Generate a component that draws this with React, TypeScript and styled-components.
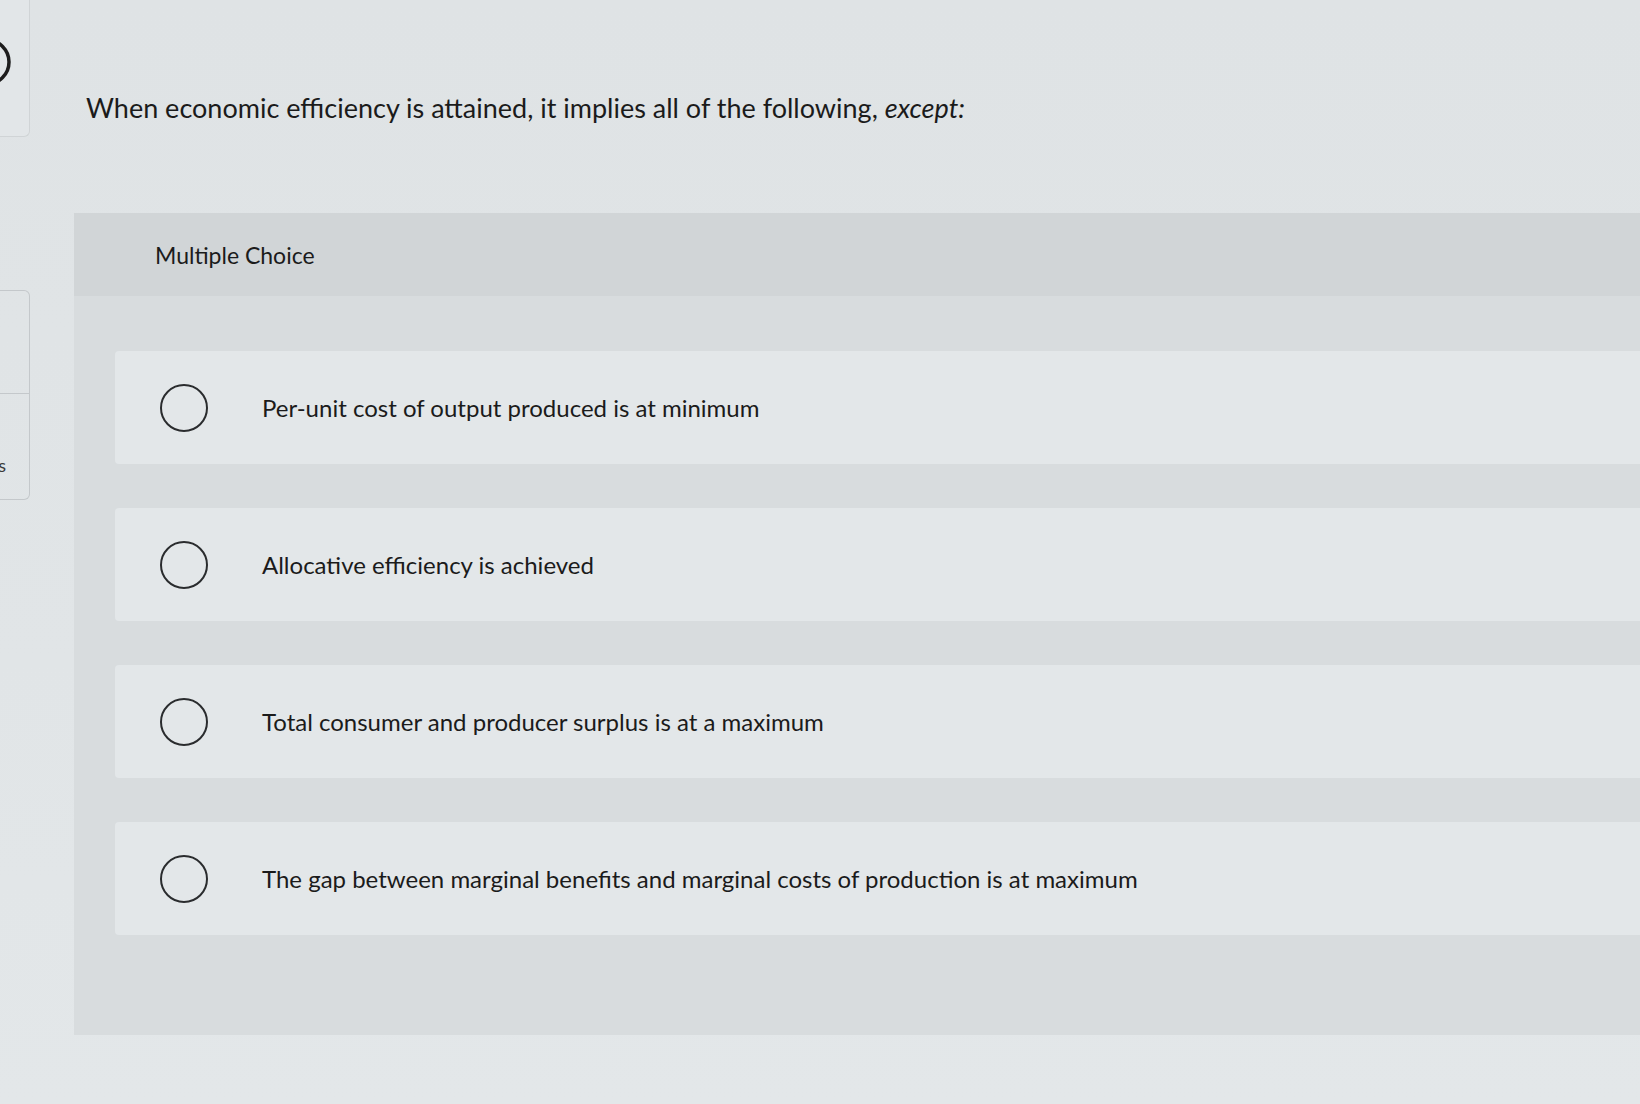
import styled, { createGlobalStyle } from "styled-components";

const options = [
  "Per-unit cost of output produced is at minimum",
  "Allocative efficiency is achieved",
  "Total consumer and producer surplus is at a maximum",
  "The gap between marginal benefits and marginal costs of production is at maximum",
];

export default function App() {
  return (
    <>
      <GlobalStyle />
      <Page>
        <Sidebar>
          <ProgressCard>
            <svg width="30" height="52" viewBox="0 0 30 52">
              <circle cx="-13" cy="26" r="22" fill="none" stroke="#1d1d1d" strokeWidth="3.5" />
            </svg>
          </ProgressCard>
          <NavBox>
            <NavCell />
            <NavCell $bottom>
              <NavLabel>Tools</NavLabel>
            </NavCell>
          </NavBox>
        </Sidebar>
        <Main>
          <Question>
            When economic efficiency is attained, it implies all of the following, <em>except:</em>
          </Question>
          <Panel>
            <PanelHeader>Multiple Choice</PanelHeader>
            <PanelBody>
              {options.map((text) => (
                <Option key={text}>
                  <Radio />
                  <OptionText>{text}</OptionText>
                </Option>
              ))}
            </PanelBody>
          </Panel>
        </Main>
      </Page>
    </>
  );
}

const GlobalStyle = createGlobalStyle`
  body {
    margin: 0;
    background: #e1e5e7;
    font-family: Lato, "Open Sans", Arial, sans-serif;
    color: #1b1b1b;
  }
`;
const Page = styled.div`
  display: flex;
  height: 1104px;
  overflow: hidden;
  background: linear-gradient(180deg, #dfe3e5 0%, #e1e5e7 60%, #e3e7e9 100%);
`;
const Sidebar = styled.div`
  width: 30px;
  flex-shrink: 0;
  display: flex;
  flex-direction: column;
  gap: 153px;
`;
const ProgressCard = styled.div`
  height: 137px;
  box-sizing: border-box;
  padding-top: 36px;
  border-right: 1px solid #d0d4d6;
  border-bottom: 1px solid #d0d4d6;
  border-bottom-right-radius: 6px;
  background: #e2e6e8;
  svg {
    display: block;
  }
`;
const NavBox = styled.div`
  height: 210px;
  box-sizing: border-box;
  border: 1px solid #c4c8cb;
  border-left: none;
  border-radius: 0 6px 6px 0;
  display: flex;
  flex-direction: column;
  overflow: hidden;
`;
const NavCell = styled.div<{ $bottom?: boolean }>`
  height: ${(p) => (p.$bottom ? "auto" : "102px")};
  flex: ${(p) => (p.$bottom ? 1 : "none")};
  border-bottom: ${(p) => (p.$bottom ? "none" : "1px solid #c4c8cb")};
  display: flex;
  justify-content: flex-end;
  padding-top: ${(p) => (p.$bottom ? "60px" : "0")};
  padding-right: 23px;
`;
const NavLabel = styled.span`
  font-size: 18px;
  line-height: 22px;
  color: #3a3a3a;
`;
const Main = styled.div`
  flex: 1;
  padding-left: 44px;
  display: flex;
  flex-direction: column;
`;
const Question = styled.div`
  padding: 91px 0 0 12px;
  font-size: 27px;
  line-height: 34px;
  em {
    font-style: italic;
  }
`;
const Panel = styled.div`
  margin-top: 88px;
  background: #d8dcde;
`;
const PanelHeader = styled.div`
  height: 83px;
  display: flex;
  align-items: center;
  padding-left: 81px;
  background: #d1d5d7;
  font-size: 23px;
`;
const PanelBody = styled.div`
  padding: 55px 0 100px 41px;
  display: flex;
  flex-direction: column;
  gap: 44px;
`;
const Option = styled.div`
  height: 113px;
  display: flex;
  align-items: center;
  background: #e3e7e9;
  border-radius: 4px 0 0 4px;
  padding-left: 45px;
`;
const Radio = styled.span`
  width: 44px;
  height: 44px;
  border: 2px solid #2a2c2e;
  border-radius: 50%;
  flex-shrink: 0;
`;
const OptionText = styled.span`
  margin-left: 54px;
  font-size: 24px;
`;
